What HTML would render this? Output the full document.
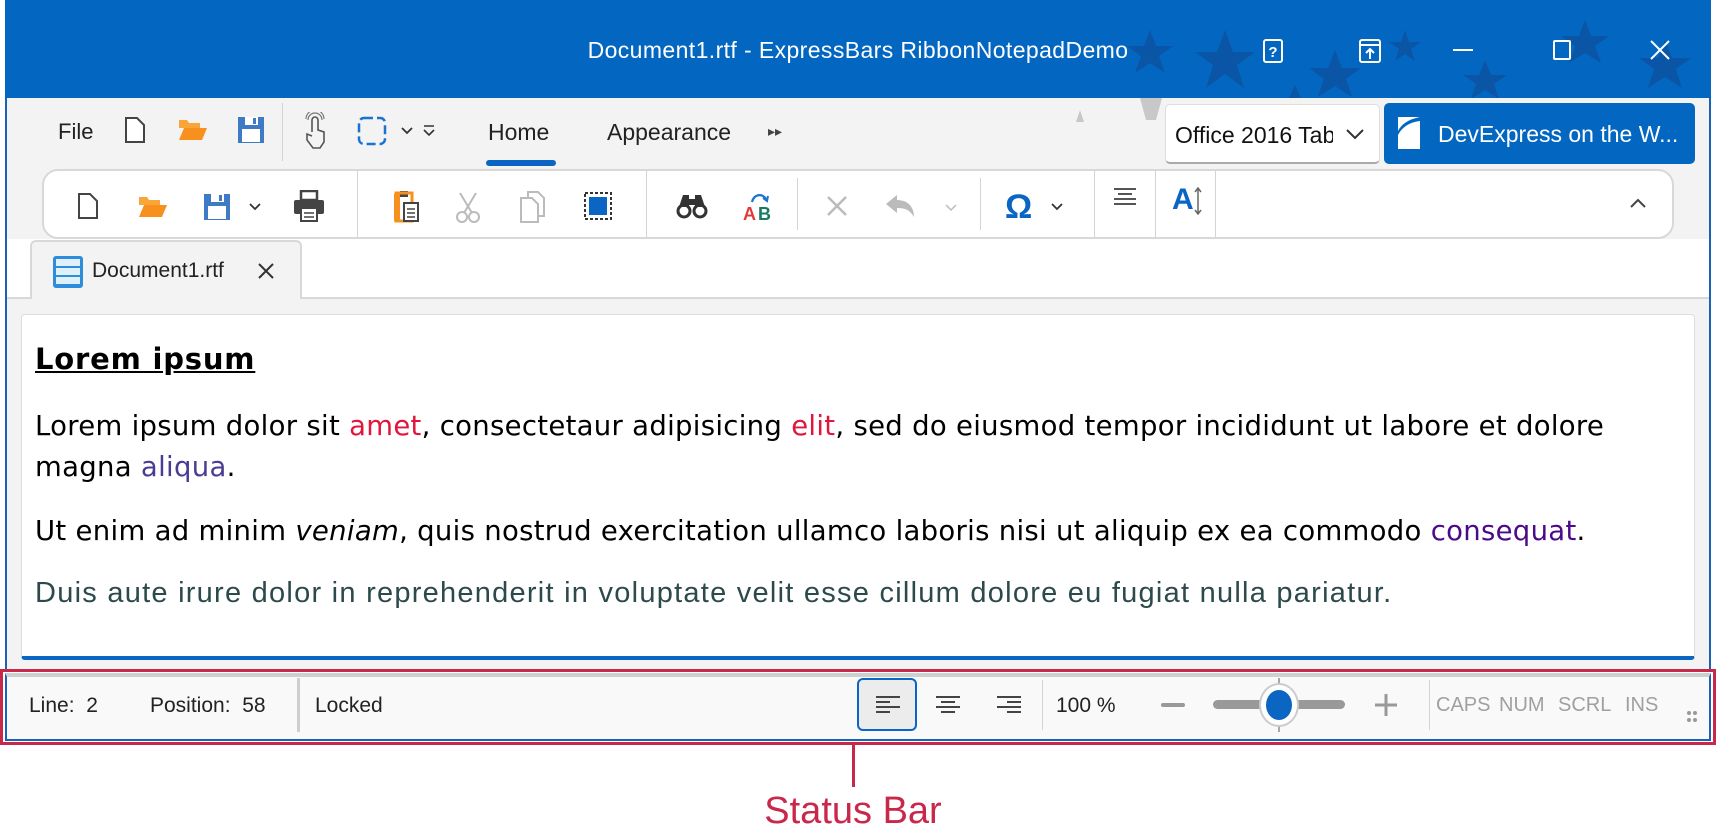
<!DOCTYPE html>
<html><head><meta charset="utf-8"><style>
*{margin:0;padding:0;box-sizing:border-box}
body{width:1716px;height:828px;background:#fff;position:relative;overflow:hidden;font-family:"Liberation Sans",sans-serif}
.a{position:absolute}
.t{position:absolute;white-space:nowrap}
.ic{position:absolute}
.sep{position:absolute;width:1px;background:#d4d4d4}
.doc{font-family:"DejaVu Sans",sans-serif;font-size:27.5px;color:#000;letter-spacing:0.3px}
</style></head><body>
<div class="a" style="left:5px;top:0;width:1706px;height:670px;background:#f3f3f3;border-left:2px solid #1a62b5;border-right:2px solid #1a62b5"></div>
<div class="a" style="left:5px;top:0;width:1706px;height:98px;background:#0367c1;overflow:hidden">
<svg width="1706" height="98" style="position:absolute;left:0;top:0">
<g fill="#0a55a6">
<polygon points="1220,30 1228,52 1250,52 1232,65 1239,88 1220,74 1201,88 1208,65 1190,52 1212,52"/>
<polygon points="1145,30 1151,46 1168,46 1154,56 1160,73 1145,63 1130,73 1136,56 1122,46 1139,46"/>
<polygon points="1330,50 1337,68 1356,68 1341,79 1347,97 1330,86 1313,97 1319,79 1304,68 1323,68"/>
<polygon points="1400,30 1404,42 1416,42 1406,49 1410,61 1400,54 1390,61 1394,49 1384,42 1396,42"/>
<polygon points="1580,20 1586,36 1604,36 1590,46 1596,63 1580,53 1564,63 1570,46 1556,36 1574,36"/>
<polygon points="1660,40 1667,58 1686,58 1671,69 1677,88 1660,77 1643,88 1649,69 1634,58 1653,58"/>
<polygon points="1480,60 1486,75 1502,75 1489,84 1494,99 1480,90 1466,99 1471,84 1458,75 1474,75"/>
<polygon points="1290,85 1296,98 1284,98"/>
</g></svg>
</div>
<div class="t" style="left:0;width:1716px;text-align:center;top:37px;color:#fff;font-size:23px;letter-spacing:0.4px">Document1.rtf - ExpressBars RibbonNotepadDemo</div>
<svg class="ic" style="left:1262px;top:38px" width="22" height="26"><rect x="2" y="2" width="18" height="22" rx="2" fill="none" stroke="#fff" stroke-width="2"/><text x="11" y="19" font-size="15" fill="#fff" text-anchor="middle" font-family="Liberation Sans" font-weight="bold">?</text></svg>
<svg class="ic" style="left:1358px;top:38px" width="24" height="26"><rect x="2" y="2" width="20" height="22" rx="2" fill="none" stroke="#fff" stroke-width="2"/><path d="M2 7H22M12 21V11M8 15l4-4 4 4" stroke="#fff" stroke-width="2" fill="none"/></svg>
<div class="a" style="left:1453px;top:49px;width:20px;height:2px;background:#fff"></div>
<div class="a" style="left:1553px;top:40px;width:18px;height:20px;border:2px solid #fff;border-radius:2px"></div>
<svg class="ic" style="left:1649px;top:39px" width="22" height="22"><path d="M2 2L20 20M20 2L2 20" stroke="#fff" stroke-width="2"/></svg>
<svg class="ic" style="left:1060px;top:98px" width="140" height="24"><g fill="#c8c8c8"><polygon points="20,12 24,24 16,24"/><polygon points="80,0 102,0 96,22 86,22"/><polygon points="120,14 124,24 116,24"/></g></svg>
<div class="t" style="left:58px;top:119px;font-size:22px;color:#222">File</div>
<svg class="ic" style="left:124px;top:116px" width="22" height="28"><path d="M2 2H13L20 9V26H2Z" fill="#fff" stroke="#444" stroke-width="2"/></svg>
<svg class="ic" style="left:178px;top:118px" width="30" height="24"><path d="M1 2H9L11 5H22V10H1Z" fill="#f7a637"/><path d="M1 22L6 10H29L24 22Z" fill="#f7901e"/></svg>
<svg class="ic" style="left:236px;top:115px" width="30" height="30"><rect x="2" y="2" width="26" height="26" fill="#3e7bc4"/><rect x="6" y="14" width="18" height="13" fill="#fff"/><rect x="9" y="2" width="13" height="8" fill="#fff"/><rect x="17" y="3" width="3" height="6" fill="#3e7bc4"/></svg>
<div class="sep" style="left:282px;top:103px;height:58px"></div>
<svg class="ic" style="left:303px;top:112px" width="24" height="38"><path d="M9 20V8a3 3 0 016 0v10l6 2v10l-4 6H10L4 28V22l5 2" fill="none" stroke="#555" stroke-width="1.6"/><path d="M5 8a7 7 0 0114 0M3 7a9 9 0 0118 0" fill="none" stroke="#777" stroke-width="1.2"/></svg>
<svg class="ic" style="left:357px;top:116px" width="30" height="30"><rect x="2" y="2" width="26" height="26" rx="5" fill="none" stroke="#1a73d0" stroke-width="2.5" stroke-dasharray="9 4"/></svg>
<svg class="ic" style="left:400px;top:124px" width="40" height="16"><path d="M2 4l5 5 5-5" stroke="#333" stroke-width="1.8" fill="none"/><path d="M24 2H34M24 6l5 5 5-5" stroke="#333" stroke-width="1.6" fill="none"/></svg>
<div class="t" style="left:488px;top:119px;font-size:23px;color:#222">Home</div>
<div class="a" style="left:486px;top:160px;width:70px;height:6px;border-radius:3px;background:#0a66c2"></div>
<div class="t" style="left:607px;top:119px;font-size:23px;color:#222">Appearance</div>
<div class="t" style="left:768px;top:123px;font-size:14px;color:#444">▸▸</div>
<div class="a" style="left:1165px;top:104px;width:215px;height:60px;background:#fff;border:1px solid #ddd;border-bottom:2px solid #aaa;border-radius:5px"></div>
<div class="t" style="left:1175px;top:122px;font-size:23px;color:#111;width:158px;overflow:hidden">Office 2016 Tab</div>
<svg class="ic" style="left:1345px;top:127px" width="20" height="14"><path d="M2 3l8 8 8-8" stroke="#333" stroke-width="2" fill="none"/></svg>
<div class="a" style="left:1384px;top:103px;width:311px;height:61px;background:#0367c1;border-radius:5px"></div>
<svg class="ic" style="left:1398px;top:117px" width="22" height="32"><path d="M0 32V18C4 10 12 5 22 4V32Z" fill="#fff"/><path d="M0 14C4 6 12 2 22 0H0Z" fill="#fff"/></svg>
<div class="t" style="left:1438px;top:121px;font-size:23px;color:#fff">DevExpress on the W...</div>
<div class="a" style="left:42px;top:169px;width:1632px;height:70px;background:#fff;border:2px solid #d8d8d8;border-radius:16px"></div>
<svg class="ic" style="left:77px;top:192px" width="22" height="28"><path d="M2 2H13L20 9V26H2Z" fill="#fff" stroke="#444" stroke-width="2"/></svg>
<svg class="ic" style="left:138px;top:195px" width="30" height="24"><path d="M1 2H9L11 5H22V10H1Z" fill="#f7a637"/><path d="M1 22L6 10H29L24 22Z" fill="#f7901e"/></svg>
<svg class="ic" style="left:202px;top:192px" width="30" height="30"><rect x="2" y="2" width="26" height="26" fill="#3e7bc4"/><rect x="6" y="14" width="18" height="13" fill="#fff"/><rect x="9" y="2" width="13" height="8" fill="#fff"/><rect x="17" y="3" width="3" height="6" fill="#3e7bc4"/></svg>
<svg class="ic" style="left:248px;top:201px" width="16" height="12"><path d="M2 3l5 5 5-5" stroke="#333" stroke-width="1.8" fill="none"/></svg>
<svg class="ic" style="left:293px;top:190px" width="32" height="32"><rect x="8" y="1" width="16" height="9" fill="none" stroke="#444" stroke-width="2.5"/><rect x="1" y="10" width="30" height="14" rx="2" fill="#444"/><rect x="8" y="18" width="16" height="13" fill="#fff" stroke="#444" stroke-width="2"/><path d="M11 23H21M11 27H21" stroke="#444" stroke-width="1.5"/></svg>
<div class="sep" style="left:357px;top:171px;height:66px"></div>
<svg class="ic" style="left:392px;top:189px" width="30" height="34"><path d="M2 5H8V32H2Z" fill="#f7901e"/><rect x="8" y="2" width="8" height="6" fill="#444"/><rect x="4" y="4" width="16" height="28" fill="none" stroke="#f7901e" stroke-width="3"/><rect x="12" y="14" width="14" height="18" fill="#fff" stroke="#444" stroke-width="2"/><path d="M15 20H23M15 24H23M15 28H23" stroke="#444" stroke-width="1.5"/></svg>
<svg class="ic" style="left:454px;top:191px" width="28" height="32"><path d="M6 2L18 22M22 2L10 22" stroke="#bbb" stroke-width="2"/><circle cx="8" cy="26" r="5" fill="none" stroke="#bbb" stroke-width="2"/><circle cx="20" cy="26" r="5" fill="none" stroke="#bbb" stroke-width="2"/></svg>
<svg class="ic" style="left:518px;top:190px" width="28" height="34"><path d="M10 2H20L26 8V26H10Z" fill="#fff" stroke="#bbb" stroke-width="2"/><path d="M3 8H14L20 14V32H3Z" fill="#fff" stroke="#bbb" stroke-width="2"/></svg>
<svg class="ic" style="left:583px;top:191px" width="30" height="30"><rect x="2" y="2" width="26" height="26" fill="none" stroke="#333" stroke-width="2" stroke-dasharray="3 2"/><rect x="6" y="6" width="18" height="18" fill="#0a66c2"/></svg>
<div class="sep" style="left:646px;top:171px;height:66px"></div>
<svg class="ic" style="left:676px;top:193px" width="32" height="26"><path d="M3 14L7 2H13V14M29 14L25 2H19V14" fill="#333"/><rect x="12" y="6" width="8" height="6" fill="#333"/><circle cx="8" cy="18" r="6" fill="none" stroke="#333" stroke-width="3"/><circle cx="24" cy="18" r="6" fill="none" stroke="#333" stroke-width="3"/></svg>
<svg class="ic" style="left:742px;top:188px" width="32" height="34"><text x="1" y="32" font-size="18" font-weight="bold" fill="#e23a3a" font-family="Liberation Sans">A</text><text x="16" y="32" font-size="18" font-weight="bold" fill="#177a62" font-family="Liberation Sans">B</text><path d="M10 14C12 6 20 5 24 11" stroke="#1a73d0" stroke-width="2.2" fill="none"/><path d="M21 10l4 3 1-5" stroke="#1a73d0" stroke-width="2" fill="none"/></svg>
<div class="sep" style="left:797px;top:178px;height:52px"></div>
<svg class="ic" style="left:826px;top:195px" width="22" height="22"><path d="M2 2L20 20M20 2L2 20" stroke="#bbb" stroke-width="2.5"/></svg>
<svg class="ic" style="left:884px;top:193px" width="32" height="26"><path d="M2 11L13 2V7C24 7 30 14 30 24C26 17 21 15 13 15V20Z" fill="#bbb"/></svg>
<svg class="ic" style="left:944px;top:203px" width="14" height="10"><path d="M2 2l5 5 5-5" stroke="#bbb" stroke-width="1.5" fill="none"/></svg>
<div class="sep" style="left:980px;top:178px;height:52px"></div>
<div class="t" style="left:1005px;top:188px;font-size:34px;color:#0a66c2;font-weight:bold">Ω</div>
<svg class="ic" style="left:1050px;top:201px" width="16" height="12"><path d="M2 3l5 5 5-5" stroke="#333" stroke-width="1.8" fill="none"/></svg>
<div class="sep" style="left:1094px;top:171px;height:66px"></div>
<svg class="ic" style="left:1113px;top:187px" width="24" height="20"><path d="M1 2H23M5 7H19M1 12H23M1 17H23" stroke="#555" stroke-width="2"/></svg>
<div class="sep" style="left:1155px;top:171px;height:66px"></div>
<div class="t" style="left:1172px;top:183px;font-size:30px;color:#0a66c2;font-weight:bold">A</div>
<svg class="ic" style="left:1193px;top:186px" width="10" height="30"><path d="M5 2V28M2 6l3-4 3 4M2 24l3 4 3-4" stroke="#666" stroke-width="1.5" fill="none"/></svg>
<div class="sep" style="left:1215px;top:171px;height:66px"></div>
<svg class="ic" style="left:1628px;top:196px" width="20" height="14"><path d="M3 11l7-7 7 7" stroke="#444" stroke-width="2" fill="none"/></svg>
<div class="a" style="left:7px;top:239px;width:1702px;height:60px;background:#fff;border-bottom:2px solid #d8d8d8"></div>
<div class="a" style="left:30px;top:240px;width:272px;height:60px;background:#f3f3f3;border:2px solid #d8d8d8;border-bottom:none;border-radius:6px 6px 0 0"></div>
<svg class="ic" style="left:53px;top:256px" width="30" height="32"><rect x="0" y="0" width="30" height="32" rx="3" fill="#2e8ddb"/><rect x="3" y="3" width="24" height="7" fill="#dff0fb"/><rect x="3" y="12" width="24" height="7" fill="#dff0fb"/><rect x="3" y="21" width="24" height="7" fill="#dff0fb"/></svg>
<div class="t" style="left:92px;top:259px;font-size:21px;color:#222">Document1.rtf</div>
<svg class="ic" style="left:257px;top:262px" width="18" height="18"><path d="M2 2L16 16M16 2L2 16" stroke="#333" stroke-width="2"/></svg>
<div class="a" style="left:7px;top:299px;width:1702px;height:371px;background:#f3f3f3"></div>
<div class="a" style="left:21px;top:314px;width:1674px;height:346px;background:#fff;border:1px solid #ddd;border-bottom:4px solid #0a66c2;border-radius:4px"></div>
<div class="t doc" style="left:35px;top:342px;font-weight:bold;text-decoration:underline;font-size:29px;letter-spacing:0.8px">Lorem ipsum</div>
<div class="t doc" style="left:35px;top:410px">Lorem ipsum dolor sit <span style="color:#e0163c">amet</span>, consectetaur adipisicing <span style="color:#e0163c">elit</span>, sed do eiusmod tempor incididunt ut labore et dolore</div>
<div class="t doc" style="left:35px;top:451px">magna <span style="color:#4b3b94">aliqua</span>.</div>
<div class="t doc" style="left:35px;top:515px">Ut enim ad minim <i>veniam</i>, quis nostrud exercitation ullamco laboris nisi ut aliquip ex ea commodo <span style="color:#4b0a8a">consequat</span>.</div>
<div class="t" style="left:35px;top:577px;font-size:29px;color:#2c4a4c;letter-spacing:1.25px">Duis aute irure dolor in reprehenderit in voluptate velit esse cillum dolore eu fugiat nulla pariatur.</div>
<div class="a" style="left:0;top:669px;width:1716px;height:76px;border:3px solid #c8284a"></div>
<div class="a" style="left:5px;top:673px;width:1706px;height:68px;background:#f9f9f9;border:2px solid #1a62b5;border-top:4px solid #cfcfcf"></div>
<div class="t" style="left:29px;top:694px;font-size:21px;color:#222">Line:&nbsp;&nbsp;2</div>
<div class="t" style="left:150px;top:694px;font-size:21px;color:#222">Position:&nbsp;&nbsp;58</div>
<div class="a" style="left:297px;top:678px;width:3px;height:54px;background:#cfcfcf"></div>
<div class="t" style="left:315px;top:694px;font-size:21px;color:#222">Locked</div>
<div class="a" style="left:857px;top:678px;width:60px;height:53px;background:#ececec;border:2px solid #0a66c2;border-radius:6px"></div>
<svg class="ic" style="left:875px;top:695px" width="26" height="20"><path d="M1 2H25M1 7H15M1 12H25M1 17H15" stroke="#444" stroke-width="2"/></svg>
<svg class="ic" style="left:935px;top:695px" width="26" height="20"><path d="M1 2H25M6 7H20M1 12H25M6 17H20" stroke="#444" stroke-width="2"/></svg>
<svg class="ic" style="left:996px;top:695px" width="26" height="20"><path d="M1 2H25M11 7H25M1 12H25M11 17H25" stroke="#444" stroke-width="2"/></svg>
<div class="sep" style="left:1042px;top:680px;height:50px"></div>
<div class="t" style="left:1056px;top:694px;font-size:21px;color:#222">100 %</div>
<div class="a" style="left:1161px;top:703px;width:24px;height:4px;background:#999;border-radius:2px"></div>
<div class="a" style="left:1213px;top:700px;width:132px;height:9px;background:#999;border-radius:5px"></div>
<div class="a" style="left:1278px;top:678px;width:2px;height:54px;background:#555;opacity:.5"></div>
<div class="a" style="left:1259px;top:683px;width:40px;height:44px;background:#fff;border:2px solid #ccc;border-radius:50%"></div>
<div class="a" style="left:1266px;top:690px;width:26px;height:30px;background:#0a66c2;border-radius:50%"></div>
<svg class="ic" style="left:1374px;top:693px" width="24" height="24"><path d="M12 1V23M1 12H23" stroke="#999" stroke-width="3"/></svg>
<div class="sep" style="left:1429px;top:680px;height:50px"></div>
<div class="t" style="left:1436px;top:694px;font-size:20px;color:#a0a0a0">CAPS</div>
<div class="t" style="left:1499px;top:694px;font-size:20px;color:#a0a0a0">NUM</div>
<div class="t" style="left:1558px;top:694px;font-size:20px;color:#a0a0a0">SCRL</div>
<div class="t" style="left:1625px;top:694px;font-size:20px;color:#a0a0a0">INS</div>
<svg class="ic" style="left:1686px;top:710px" width="12" height="14"><g fill="#999"><circle cx="3" cy="3" r="2"/><circle cx="9" cy="3" r="2"/><circle cx="3" cy="10" r="2"/><circle cx="9" cy="10" r="2"/></g></svg>
<div class="a" style="left:852px;top:745px;width:3px;height:42px;background:#c8284a"></div>
<div class="t" style="left:0;width:1706px;text-align:center;top:790px;font-size:38px;color:#c8284a">Status Bar</div>
</body></html>
